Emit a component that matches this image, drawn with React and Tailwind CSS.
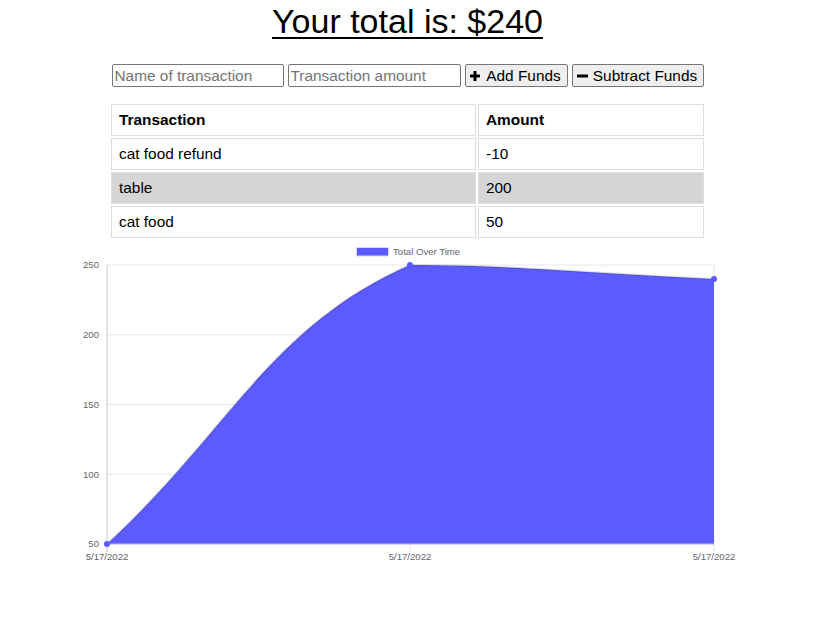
import React from "react";

const font = "font-['Liberation_Sans',Arial,Helvetica,sans-serif]";

function PlusIcon() {
  return (
    <svg width="10" height="10" viewBox="0 0 10 10" className="shrink-0">
      <rect x="0" y="3.5" width="10" height="3" rx="0.6" fill="#000" />
      <rect x="3.5" y="0" width="3" height="10" rx="0.6" fill="#000" />
    </svg>
  );
}

function MinusIcon() {
  return (
    <svg width="11" height="10" viewBox="0 0 11 10" className="shrink-0">
      <rect x="0" y="3.5" width="11" height="3" rx="0.6" fill="#000" />
    </svg>
  );
}

const rows = [
  { name: "cat food refund", amount: "-10", gray: false },
  { name: "table", amount: "200", gray: true },
  { name: "cat food", amount: "50", gray: false },
];

function Chart() {
  const x0 = 107, x1 = 410, x2 = 714;
  const yFor = (v) => 544 - (v - 50) * (279 / 200);
  const p0 = [x0, yFor(50)];
  const p1 = [x1, yFor(250)];
  const p2 = [x2, yFor(240)];
  const curve = `M${p0[0]},${p0[1]} C228.2,432.4 270.4,326 ${p1[0]},${p1[1]} C513.2,265 592.4,273.4 ${p2[0]},${p2[1]}`;
  const area = `${curve} L${x2},544 L${x0},544 Z`;
  const ticks = [250, 200, 150, 100, 50];
  const fill = "#5b5bff";
  return (
    <svg width="833" height="330" viewBox="0 240 833 330" className="block">
      <rect x="356.5" y="247.5" width="32" height="8.5" fill={fill} stroke="#d9d9f5" strokeWidth="1" />
      <text x="393" y="254.6" fontSize="9.6" fill="#666" fontFamily="Liberation Sans, Arial, sans-serif">
        Total Over Time
      </text>
      {ticks.map((t) => (
        <line key={t} x1={x0} x2={x2} y1={yFor(t)} y2={yFor(t)} stroke="#e8e8e8" strokeWidth="1" />
      ))}
      {[x0, x1, x2].map((x) => (
        <line key={x} x1={x} x2={x} y1={265} y2={552} stroke="#e3e3e3" strokeWidth="1" />
      ))}
      <line x1={x0} x2={x0} y1={265} y2={552} stroke="#d6d6d6" strokeWidth="1" />
      <path d={area} fill={fill} />
      <path d={curve} fill="none" stroke="rgba(0,0,0,0.12)" strokeWidth="2" />
      <line x1={x0} x2={x2} y1={544} y2={544} stroke="#b9b9f7" strokeWidth="1" />
      {[p0, p1, p2].map((p, i) => (
        <circle key={i} cx={p[0]} cy={p[1]} r="3" fill={fill} />
      ))}
      {ticks.map((t) => (
        <text
          key={t}
          x="99"
          y={yFor(t) + 3.4}
          fontSize="9.6"
          textAnchor="end"
          fill="#666"
          fontFamily="Liberation Sans, Arial, sans-serif"
        >
          {t}
        </text>
      ))}
      {[x0, x1, x2].map((x) => (
        <text
          key={x}
          x={x}
          y="560"
          fontSize="9.6"
          textAnchor="middle"
          fill="#666"
          fontFamily="Liberation Sans, Arial, sans-serif"
        >
          5/17/2022
        </text>
      ))}
    </svg>
  );
}

export default function App() {
  return (
    <div className={`w-[833px] h-[630px] bg-white text-black ${font}`}>
      <div className="w-[815px]">
        <h1 className="pt-[2px] text-center text-[34px] leading-[39px] font-normal underline decoration-[2px] underline-offset-[4px]">
          Your total is: $240
        </h1>
        <div className="mt-[23px] flex justify-center gap-[4px] text-[15.4px]">
          <input
            type="text"
            placeholder="Name of transaction"
            className="w-[172px] h-[23px] border border-[#767676] rounded-[2px] px-[2px] text-[15.4px] placeholder:text-[#757575] outline-none"
          />
          <input
            type="number"
            placeholder="Transaction amount"
            className="w-[173px] h-[23px] border border-[#767676] rounded-[2px] px-[2px] text-[15.4px] placeholder:text-[#757575] outline-none [appearance:textfield]"
          />
          <button className="w-[103px] h-[23px] flex items-center justify-center gap-[6px] bg-[#efefef] border border-[#767676] rounded-[2px] text-[15.4px] leading-none pr-[1px]">
            <PlusIcon />
            <span>Add Funds</span>
          </button>
          <button className="w-[132px] h-[23px] flex items-center justify-center gap-[5px] bg-[#efefef] border border-[#767676] rounded-[2px] text-[15.4px] leading-none pr-[1px]">
            <MinusIcon />
            <span>Subtract Funds</span>
          </button>
        </div>
        <table className="mt-[15px] mx-auto w-[597px] border-separate border-spacing-[2px] text-[15.4px]">
          <thead>
            <tr>
              <th className="w-[365px] h-[32px] border border-[#dddddd] px-[7px] py-0 text-left font-bold">
                Transaction
              </th>
              <th className="h-[32px] border border-[#dddddd] px-[7px] py-0 text-left font-bold">Amount</th>
            </tr>
          </thead>
          <tbody>
            {rows.map((r) => (
              <tr key={r.name}>
                <td className={`h-[32px] border border-[#dddddd] px-[7px] py-0 ${r.gray ? "bg-[#d6d6d6]" : ""}`}>
                  {r.name}
                </td>
                <td className={`h-[32px] border border-[#dddddd] px-[7px] py-0 ${r.gray ? "bg-[#d6d6d6]" : ""}`}>
                  {r.amount}
                </td>
              </tr>
            ))}
          </tbody>
        </table>
      </div>
      <Chart />
    </div>
  );
}
